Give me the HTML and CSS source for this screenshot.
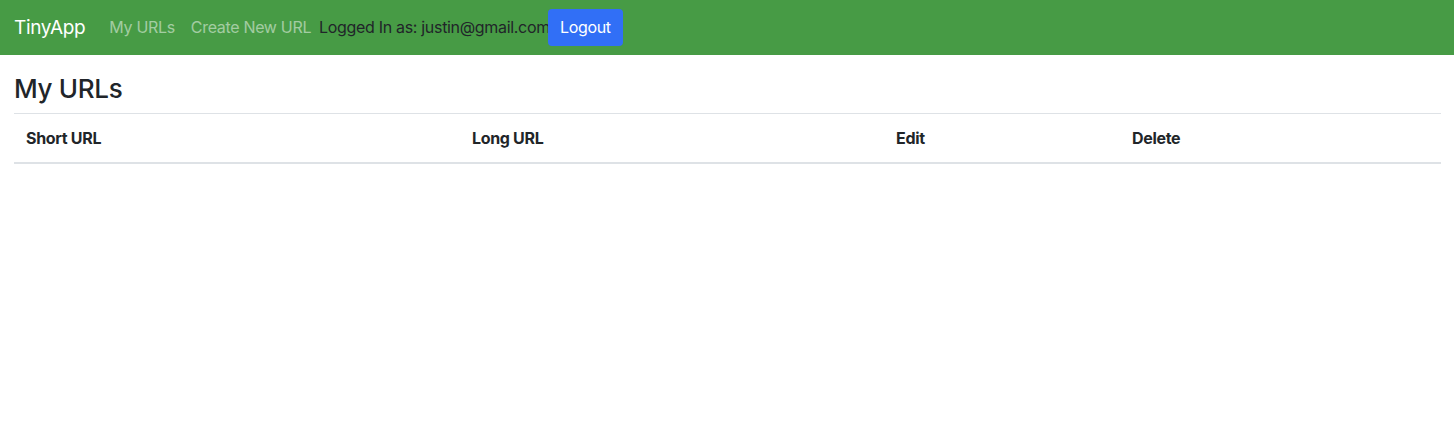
FILE: index.html
```html
<!DOCTYPE html>
<html lang="en">
<head>
    <meta charset="UTF-8">
    <meta name="viewport" content="width=device-width, initial-scale=1.0">
    <title>TinyApp</title>
    <link rel="stylesheet" href="styles.css">
</head>
<body>

<nav class="navbar">
    <a class="brand" href="#">TinyApp</a>
    <a class="nav-link" href="#">My URLs</a>
    <a class="nav-link" href="#">Create New URL</a>
    <span class="user-info">Logged In as: justin@gmail.com</span>
    <button class="btn-logout">Logout</button>
</nav>

<main class="content">
    <h3>My URLs</h3>
    <table class="url-table">
        <thead>
            <tr>
                <th class="col-short">Short URL</th>
                <th class="col-long">Long URL</th>
                <th class="col-edit">Edit</th>
                <th class="col-delete">Delete</th>
            </tr>
        </thead>
        <tbody></tbody>
    </table>
</main>

</body>
</html>
```

FILE: styles.css
```css
* {
    margin: 0;
    padding: 0;
    box-sizing: border-box;
}

body {
    font-family: Inter, "Noto Sans", Arial, sans-serif;
    font-size: 16px;
    letter-spacing: -0.02em;
    color: #212529;
    background-color: #fff;
}

.navbar {
    display: flex;
    align-items: center;
    height: 55px;
    padding: 0 14px 1px;
    background-color: #479b45;
}

.brand {
    font-size: 19px;
    color: #fff;
    text-decoration: none;
    margin-right: 16px;
}

.nav-link {
    padding: 0 8px;
    color: rgba(255, 255, 255, 0.5);
    text-decoration: none;
}

.user-info {
    color: #212529;
}

.btn-logout {
    height: 37px;
    padding: 0 12px;
    margin-left: -2px;
    font-family: inherit;
    font-size: 16px;
    letter-spacing: inherit;
    color: #fff;
    background-color: #316ff6;
    border: none;
    border-radius: 4px;
    cursor: pointer;
}

.content {
    padding: 0 13px 0 14px;
}

h3 {
    font-size: 26px;
    font-weight: 500;
    line-height: 1.2;
    margin-top: 18px;
    margin-bottom: 9px;
}

.url-table {
    width: 100%;
    border-collapse: collapse;
}

.url-table th {
    text-align: left;
    font-size: 16px;
    font-weight: 700;
    line-height: 24px;
    padding: 12px;
    border-top: 1px solid #dee2e6;
    border-bottom: 2px solid #dee2e6;
}

.col-short { width: 446px; }
.col-long { width: 424px; }
.col-edit { width: 236px; }
```
